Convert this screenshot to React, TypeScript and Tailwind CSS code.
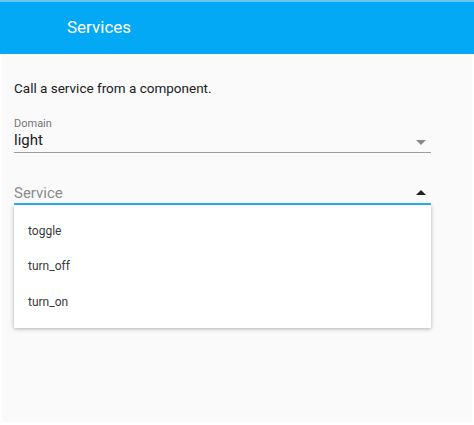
export default function App() {
  const services = ["toggle", "turn_off", "turn_on"];

  return (
    <div
      className="flex h-[425px] w-[474px] flex-col overflow-hidden bg-white"
      style={{ fontFamily: "Roboto, 'Noto Sans', sans-serif" }}
    >
      <div className="h-[2px] bg-[#6cc4ee]" />
      <header className="flex h-[52px] items-center bg-[#03a9f4] pl-[67px]">
        <h1 className="text-[17px] font-normal text-white">Services</h1>
      </header>

      <main className="mx-[2px] mb-[3px] flex-1 bg-[#fafafa] px-[12px] pt-[26px]">
        <p className="text-[13.5px] leading-[16px] text-[#212121]">Call a service from a component.</p>

        <div className="mt-[21px] w-[417px]">
          <label className="block text-[11px] leading-[13px] text-[#757575]">Domain</label>
          <div className="flex items-center justify-between border-b border-[#9e9e9e] pb-[2px]">
            <span className="text-[15px] leading-[20px] text-[#212121]">light</span>
            <svg width="10" height="5" viewBox="0 0 10 5" className="mr-[5px] mt-[4px]">
              <path d="M0 0 L10 0 L5 5 Z" fill="#8a8a8a" />
            </svg>
          </div>
        </div>

        <div className="relative mt-[30px] w-[417px]">
          <div className="flex items-center justify-between border-b-2 border-[#2fb4ec]">
            <span className="text-[15px] leading-[20px] text-[#8c8c8c]">Service</span>
            <svg width="10" height="5" viewBox="0 0 10 5" className="mr-[5px] mb-[2px]">
              <path d="M0 5 L10 5 L5 0 Z" fill="#212121" />
            </svg>
          </div>

          <ul className="absolute left-0 top-full z-10 w-full bg-white pb-[8px] pt-[8px] shadow-[0_1px_4px_rgba(0,0,0,0.3)]">
            {services.map((s) => (
              <li key={s} className="flex h-[35.5px] items-center px-[14px] text-[12px] text-[#3a3a3a]">
                {s}
              </li>
            ))}
          </ul>
        </div>
      </main>
    </div>
  );
}
